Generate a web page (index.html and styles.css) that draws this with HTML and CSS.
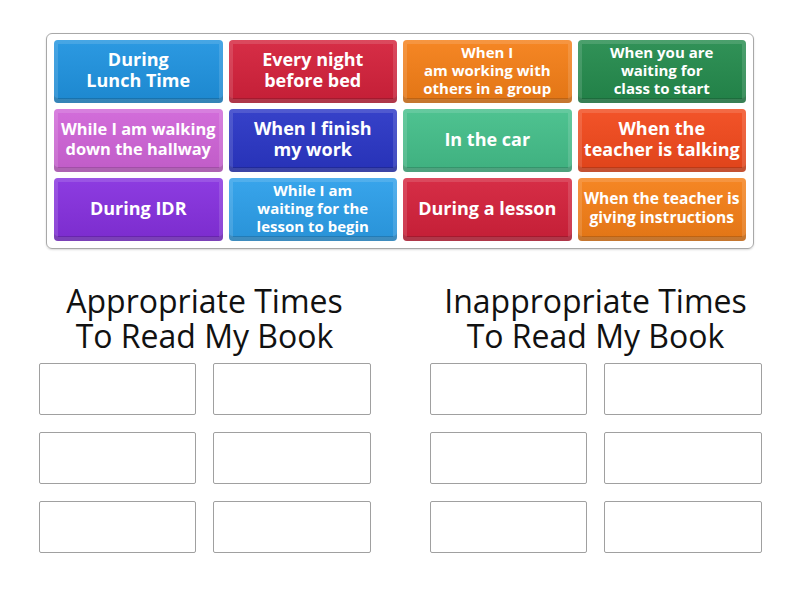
FILE: index.html
```html
<!DOCTYPE html>
<html>
<head>
    <title>Reading Times Sort</title>
    <link rel="stylesheet" href="styles.css">
</head>
<body>
    <div class="tile-bank">
        <div class="tile blue big">During<br>Lunch Time</div>
        <div class="tile red big">Every night<br>before bed</div>
        <div class="tile orange small">When I<br>am working with<br>others in a group</div>
        <div class="tile green small">When you are<br>waiting for<br>class to start</div>

        <div class="tile pink mid">While I am walking<br>down the hallway</div>
        <div class="tile navy big">When I finish<br>my work</div>
        <div class="tile teal big">In the car</div>
        <div class="tile flame big">When the<br>teacher is talking</div>

        <div class="tile purple big">During IDR</div>
        <div class="tile sky small">While I am<br>waiting for the<br>lesson to begin</div>
        <div class="tile red big">During a lesson</div>
        <div class="tile orange mid2">When the teacher is<br>giving instructions</div>
    </div>

    <div class="groups">
        <div class="group">
            <h2>Appropriate Times<br>To Read My Book</h2>
            <div class="slots">
                <div class="slot"></div>
                <div class="slot"></div>
                <div class="slot"></div>
                <div class="slot"></div>
                <div class="slot"></div>
                <div class="slot"></div>
            </div>
        </div>
        <div class="group">
            <h2>Inappropriate Times<br>To Read My Book</h2>
            <div class="slots">
                <div class="slot"></div>
                <div class="slot"></div>
                <div class="slot"></div>
                <div class="slot"></div>
                <div class="slot"></div>
                <div class="slot"></div>
            </div>
        </div>
    </div>
</body>
</html>
```

FILE: styles.css
```css
body {
    margin: 0;
    background: #fff;
    font-family: 'Open Sans', 'Liberation Sans', sans-serif;
}

.tile-bank {
    width: 692px;
    margin: 33px auto 0;
    padding: 6px 7px 7px;
    border: 1px solid #a8a8a8;
    border-radius: 6px;
    box-shadow: 0 1px 2px rgba(0, 0, 0, 0.15);
    display: grid;
    grid-template-columns: repeat(4, 1fr);
    grid-auto-rows: 63px;
    gap: 6px 6px;
}

.tile {
    display: flex;
    align-items: center;
    justify-content: center;
    text-align: center;
    color: #fff;
    font-weight: 700;
    border-radius: 4px;
    padding-bottom: 3px;
    box-sizing: border-box;
    background-image: linear-gradient(to bottom, rgba(255, 255, 255, 0.06), rgba(0, 0, 0, 0.08));
    box-shadow: inset 0 0 0 4px rgba(255, 255, 255, 0.13), inset 0 -5px 0 rgba(0, 0, 0, 0.16);
}

.big {
    font-size: 18px;
    line-height: 21px;
}

.mid {
    font-size: 16.4px;
    line-height: 20px;
}

.mid2 {
    font-size: 15.6px;
    line-height: 19px;
}

.small {
    font-size: 15px;
    line-height: 18px;
}

.blue { background-color: #1f93e0; }
.red { background-color: #d4213b; }
.orange { background-color: #f57f17; }
.green { background-color: #248b4d; }
.pink { background-color: #d064d8; }
.navy { background-color: #2a36c6; }
.teal { background-color: #44bf8a; }
.flame { background-color: #f2491c; }
.purple { background-color: #8630df; }
.sky { background-color: #2c9fea; }

.groups {
    display: flex;
    justify-content: center;
    gap: 59px;
    margin-top: 34px;
}

.group {
    width: 332px;
}

h2 {
    margin: 0 0 10px;
    text-align: center;
    font-size: 32px;
    line-height: 35px;
    font-weight: 400;
    color: #111;
}

.slots {
    display: grid;
    grid-template-columns: 1fr 1fr;
    grid-auto-rows: 52px;
    gap: 17px 17px;
}

.slot {
    border: 1px solid #a0a0a0;
    border-radius: 2px;
}
```
